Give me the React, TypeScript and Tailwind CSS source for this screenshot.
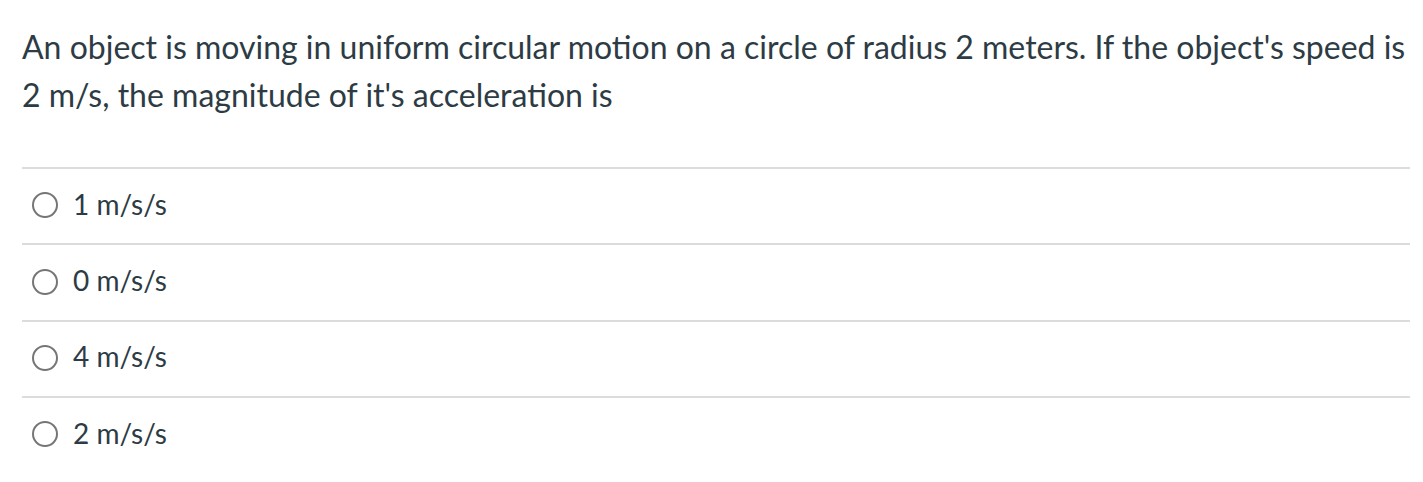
const answers = ['1 m/s/s', '0 m/s/s', '4 m/s/s', '2 m/s/s'];

export default function App() {
  return (
    <div className="min-h-screen bg-white px-[22px] pt-[23px] text-[#2d3b45]" style={{ fontFamily: 'Lato, "Noto Sans", sans-serif' }}>
      <p className="mr-[-14px] text-[32px] leading-[48px]">
        An object is moving in uniform circular motion on a circle of radius 2 meters. If the object's speed is 2 m/s,
        the magnitude of it's acceleration is
      </p>
      <div className="mt-[48px] mr-[-9px]">
        {answers.map((a) => (
          <label key={a} className="flex h-[76.4px] items-center border-t-2 border-[#dcdcdc] pb-[2px] pl-[10px]">
            <span className="h-[26px] w-[26px] rounded-full border-2 border-[#767676] bg-white" />
            <span className="mb-[3px] ml-[15px] text-[28px] leading-[42px]">{a}</span>
          </label>
        ))}
      </div>
    </div>
  );
}
